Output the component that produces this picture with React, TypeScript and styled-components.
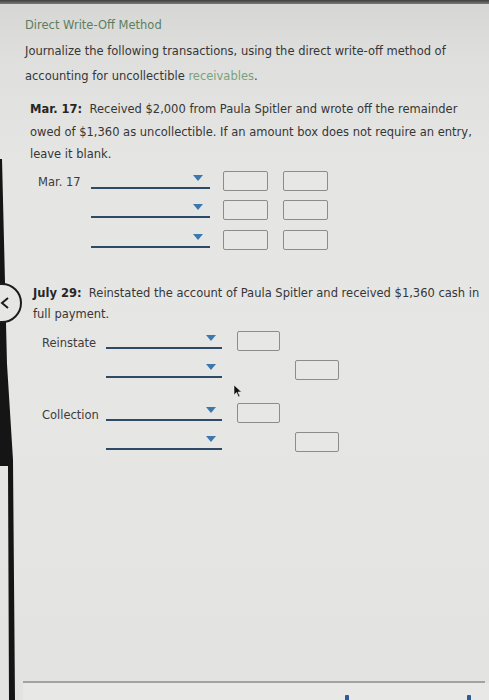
import React from "react";
import styled, { createGlobalStyle } from "styled-components";

const Global = createGlobalStyle`
  html, body { margin: 0; padding: 0; }
  body { background: #e4e4e2; font-family: "DejaVu Sans", Verdana, sans-serif; }
  #root { width: 489px; height: 700px; overflow: hidden; }
`;

const Screen = styled.div`
  position: relative;
  width: 489px;
  height: 700px;
  display: flex;
  flex-direction: column;
  background: linear-gradient(180deg, #d6d6d4 0px, #dfdfdd 60px, #e5e5e3 160px, #e6e6e4 420px, #e3e3e1 680px);
  overflow: hidden;
`;

const TopBar = styled.div`
  height: 4px;
  background: linear-gradient(180deg, #3e3e3e, #7a7a78);
  flex: none;
`;

const Body = styled.div`
  flex: 1;
  display: flex;
  flex-direction: row;
  min-height: 0;
`;

const Bezel = styled.div`
  width: 16px;
  flex: none;
  display: flex;
`;

const BezelSvg = styled.svg`
  width: 16px;
  height: 100%;
  display: block;
`;

const Main = styled.div`
  flex: 1;
  display: flex;
  flex-direction: column;
  padding-left: 9px;
  padding-right: 0;
  min-width: 0;
`;

const Title = styled.div`
  margin-top: 14px;
  font-size: 11.5px;
  line-height: 14px;
  color: #5d7f5f;
`;

const Para = styled.p<{ $lh: number; $indent: number; $top: number }>`
  margin: ${(p) => p.$top}px 0 0 ${(p) => p.$indent}px;
  font-size: 11.5px;
  line-height: ${(p) => p.$lh}px;
  color: #363636;
  white-space: nowrap;
`;

const Strong = styled.b`
  color: #262626;
  font-weight: bold;
`;

const GreenLink = styled.span`
  color: #78a27c;
`;

const EntryGrid = styled.div<{ $indent: number; $top: number; $cols: string; $gap: number }>`
  margin: ${(p) => p.$top}px 0 0 ${(p) => p.$indent}px;
  display: grid;
  grid-template-columns: ${(p) => p.$cols};
  column-gap: ${(p) => p.$gap}px;
  align-items: start;
`;

const RowLabel = styled.div<{ $top: number }>`
  font-size: 11.5px;
  line-height: 14px;
  color: #3c3c3c;
  padding-top: ${(p) => p.$top}px;
  white-space: nowrap;
`;

const Select = styled.div<{ $w: number; $pr: number }>`
  width: ${(p) => p.$w}px;
  height: 12px;
  border-bottom: 2px solid #2d4a66;
  display: flex;
  justify-content: flex-end;
  align-items: flex-start;
  padding-top: 4px;
  padding-right: ${(p) => p.$pr}px;
  box-sizing: content-box;
`;

const Tri = styled.div`
  width: 0;
  height: 0;
  border-left: 5.5px solid transparent;
  border-right: 5.5px solid transparent;
  border-top: 6px solid #3a78ad;
`;

const Box = styled.div<{ $w: number }>`
  width: ${(p) => p.$w}px;
  height: 20px;
  box-sizing: border-box;
  border: 1.5px solid #8c8c8c;
  border-radius: 2px;
  background: #e7e7e5;
`;

const Empty = styled.div``;

const Spacer = styled.div<{ $h: number }>`
  grid-column: 1 / -1;
  height: ${(p) => p.$h}px;
`;

const Fill = styled.div`
  flex: 1;
`;

const BottomLine = styled.div`
  height: 2px;
  margin-left: -2px;
  margin-right: 4px;
  background: #a3a3a0;
  box-shadow: 0 1px 0 #c8c8c6;
`;

const BottomStrip = styled.div`
  height: 17px;
  display: flex;
  align-items: flex-end;
  background: #e8e8e6;
  margin-left: -2px;
`;

const BlueMark = styled.div<{ $ml: number }>`
  margin-left: ${(p) => p.$ml}px;
  width: 4px;
  height: 5px;
  background: #2f5a9a;
  border-radius: 1px 1px 0 0;
`;

const BackButton = styled.div`
  position: absolute;
  left: -18px;
  top: 283px;
  width: 40px;
  height: 40px;
  box-sizing: border-box;
  border: 2.5px solid #1c1c1c;
  border-radius: 50%;
  background: #e6e6e4;
  display: flex;
  align-items: center;
  justify-content: flex-end;
  padding-right: 11px;
`;

const Cursor = styled.svg`
  position: absolute;
  left: 233px;
  top: 384px;
  width: 10px;
  height: 14px;
`;

type MarRow = { label?: string };

const marRows: MarRow[] = [{ label: "Mar. 17" }, {}, {}];

type JulRow = { label?: string; col: "debit" | "credit"; gapBefore?: number };
const julRows: JulRow[] = [
  { label: "Reinstate", col: "debit" },
  { col: "credit" },
  { label: "Collection", col: "debit", gapBefore: 14 },
  { col: "credit" },
];

export default function App() {
  return (
    <>
      <Global />
      <Screen>
        <TopBar />
        <Body>
          <Bezel>
            <BezelSvg viewBox="0 0 16 696" preserveAspectRatio="none">
              <polygon points="0,155 2,155 7,360 13,456 15,696 9,696 8,462 0,462" fill="#151515" />
            </BezelSvg>
          </Bezel>
          <Main>
            <Title>Direct Write-Off Method</Title>
            <Para $lh={25} $indent={0} $top={7}>
              Journalize the following transactions, using the direct write-off method of
              <br />
              accounting for uncollectible <GreenLink>receivables</GreenLink>.
            </Para>
            <Para $lh={22.5} $indent={5} $top={9}>
              <Strong>Mar. 17:</Strong>&nbsp; Received $2,000 from Paula Spitler and wrote off the remainder
              <br />
              owed of $1,360 as uncollectible. If an amount box does not require an entry,
              <br />
              leave it blank.
            </Para>
            <EntryGrid $indent={13} $top={5} $gap={13} $cols="40px 119px 47px 45px">
              {marRows.map((r, i) => (
                <React.Fragment key={i}>
                  {i > 0 && <Spacer $h={9.5} />}
                  <RowLabel $top={4}>{r.label ?? ""}</RowLabel>
                  <Select $w={112} $pr={7}>
                    <Tri />
                  </Select>
                  <Box $w={45} />
                  <Box $w={45} />
                </React.Fragment>
              ))}
            </EntryGrid>
            <Para $lh={21} $indent={8} $top={33}>
              <Strong>July 29:</Strong>&nbsp; Reinstated the account of Paula Spitler and received $1,360 cash in
              <br />
              full payment.
            </Para>
            <EntryGrid $indent={17} $top={6} $gap={15} $cols="49px 116px 43px 44px">
              {julRows.map((r, i) => (
                <React.Fragment key={i}>
                  {i > 0 && <Spacer $h={9 + (r.gapBefore ?? 0)} />}
                  <RowLabel $top={5}>{r.label ?? ""}</RowLabel>
                  <Select $w={110} $pr={6}>
                    <Tri />
                  </Select>
                  {r.col === "debit" ? <Box $w={43} /> : <Empty />}
                  {r.col === "credit" ? <Box $w={44} /> : <Empty />}
                </React.Fragment>
              ))}
            </EntryGrid>
            <Fill />
            <BottomLine />
            <BottomStrip>
              <BlueMark $ml={322} />
              <BlueMark $ml={118} />
            </BottomStrip>
          </Main>
        </Body>
        <BackButton>
          <svg width="9" height="12" viewBox="0 0 9 12">
            <polyline points="8,1 2,6 8,11" fill="none" stroke="#1c1c1c" strokeWidth="2" />
          </svg>
        </BackButton>
        <Cursor viewBox="0 0 10 14">
          <polygon points="1,1 1,11 3.5,8.5 5.5,13 7,12.3 5,8 8.5,8" fill="#111" stroke="#eee" strokeWidth="0.6" />
        </Cursor>
      </Screen>
    </>
  );
}
